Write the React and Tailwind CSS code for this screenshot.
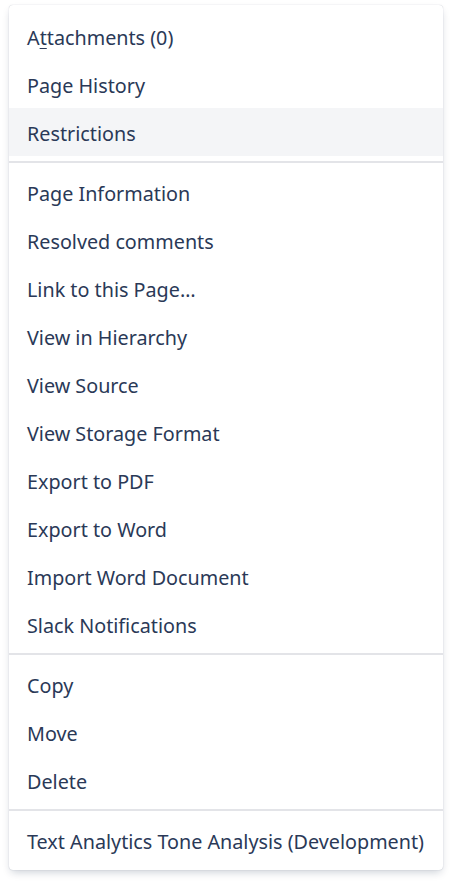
import React from 'react';

const sections = [
  ['Attachments (0)', 'Page History', 'Restrictions'],
  [
    'Page Information',
    'Resolved comments',
    'Link to this Page…',
    'View in Hierarchy',
    'View Source',
    'View Storage Format',
    'Export to PDF',
    'Export to Word',
    'Import Word Document',
    'Slack Notifications',
  ],
  ['Copy', 'Move', 'Delete'],
  ['Text Analytics Tone Analysis (Development)'],
];

const Label = ({ text }) => {
  // access key underline on the "t" of Attachments
  if (text.startsWith('Attachments')) {
    return (
      <span>
        A<span className="underline underline-offset-[3px]">t</span>
        {text.slice(2)}
      </span>
    );
  }
  return <span>{text}</span>;
};

const MenuItem = ({ text, active }) => (
  <div
    className={`h-12 flex items-center pt-1 px-[18px] text-[19.75px] text-[#2a3957] ${
      active ? 'bg-[#f4f5f7]' : ''
    }`}
  >
    <Label text={text} />
  </div>
);

export default function App() {
  return (
    <div
      className="min-h-screen bg-white pt-[5px] pl-[9px]"
      style={{ fontFamily: '"Noto Sans", "Open Sans", sans-serif' }}
    >
      <div className="w-[434px] bg-white rounded-[4px] shadow-[0_4px_8px_-2px_rgba(9,30,66,0.22),0_0_1px_rgba(9,30,66,0.3)]">
        {sections.map((items, i) => (
          <div
            key={i}
            className={`${i === 0 ? 'pt-[7px]' : 'pt-[5px] border-t-2 border-[#e3e4e8]'} ${
              i === sections.length - 1 ? 'pb-[6px]' : 'pb-[5px]'
            }`}
          >
            {items.map((t) => (
              <MenuItem key={t} text={t} active={t === 'Restrictions'} />
            ))}
          </div>
        ))}
      </div>
    </div>
  );
}
